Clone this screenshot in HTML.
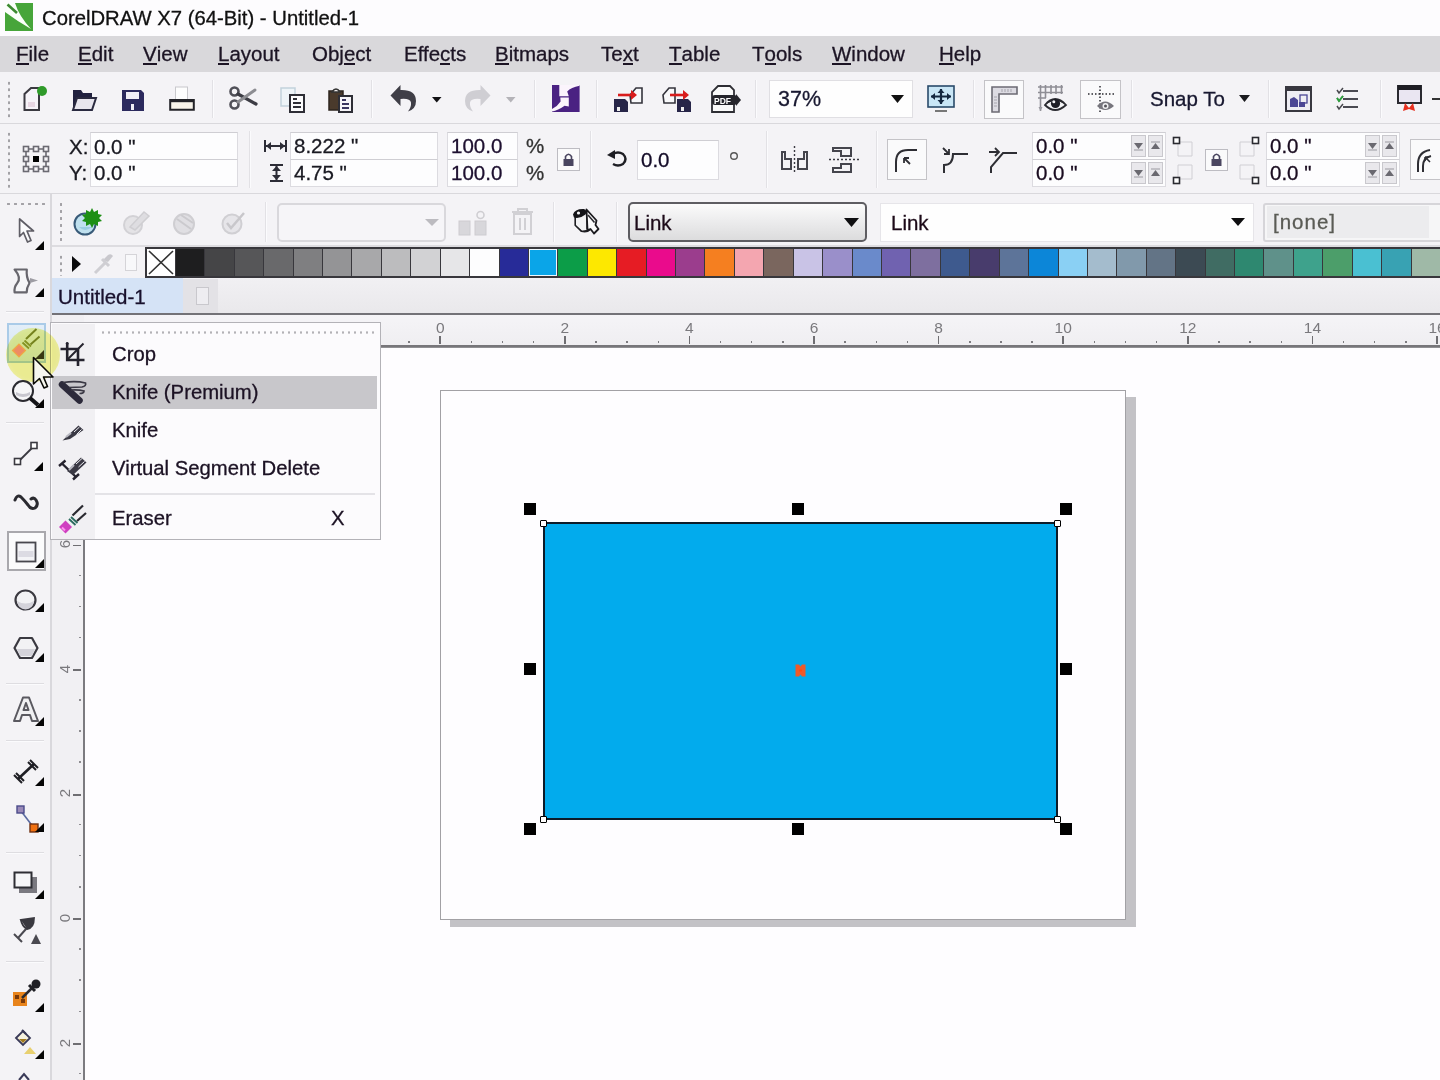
<!DOCTYPE html>
<html><head><meta charset="utf-8">
<style>
*{margin:0;padding:0;box-sizing:border-box}
html,body{width:1440px;height:1080px;overflow:hidden;background:#f3f2f5;font-family:"Liberation Sans",sans-serif;color:#1a1a22}
.a{position:absolute}
svg{position:absolute;overflow:visible}
#title{left:0;top:0;width:1440px;height:36px;background:#fdfcfe}
#menu{left:0;top:36px;width:1440px;height:36px;background:#d9d8db}
#tb1{left:0;top:72px;width:1440px;height:52px;background:#f4f3f6;border-bottom:1.5px solid #d9d8dc}
#prop{left:0;top:124px;width:1440px;height:70px;background:#f4f3f6;border-bottom:1.5px solid #d9d8dc}
#toolbox{left:0;top:194px;width:51px;height:886px;background:#f4f3f6;border-right:2px solid #dddce0}
#tb2{left:51px;top:194px;width:1389px;height:53px;background:#f4f3f6;border-bottom:2px solid #dddce0}
#pal{left:51px;top:247px;width:1389px;height:32px;background:#f4f3f6}
#tabrow{left:51px;top:278px;width:1389px;height:37px;background:linear-gradient(#f1f0f3,#e9e8eb)}
#hruler{left:51px;top:315px;width:1389px;height:33px;background:#f1f0f3;border-bottom:2px solid #909093}
#vruler{left:51px;top:315px;width:34px;height:765px;background:#f1f0f3;border-right:2px solid #909093}
#canvas{left:85px;top:347px;width:1355px;height:733px;background:#fefdff}
.t{position:absolute;white-space:nowrap;font-size:20.5px;line-height:24px;-webkit-text-stroke:0.3px currentColor}
.m{top:6px;color:#1c1424}
.m u{text-decoration:none;border-bottom:2px solid #1c1424;display:inline-block;line-height:19px}
.sep{position:absolute;width:2px;background:#e2e1e5;border-right:1px solid #fbfbfd}
.grip{position:absolute;width:4px;background-image:radial-gradient(circle,#a3a2a6 1.1px,transparent 1.5px);background-size:4px 6.5px}
.field{position:absolute;background:#fdfdfe;border:1px solid #dcdbe0;border-top-color:#cfced3}
.btnp{position:absolute;border:1px solid #c4c3c7;background:#fafafb}
</style></head><body>
<div id="tb1" class="a"></div>
<div id="prop" class="a"></div>
<div id="toolbox" class="a"></div>
<div id="tb2" class="a"></div>
<div id="pal" class="a"></div>
<div id="tabrow" class="a"></div>
<div id="canvas" class="a"></div>
<div id="hruler" class="a"></div>
<div id="vruler" class="a"></div>
<!-- TITLE -->
<div id="title" class="a">
 <svg style="left:5px;top:3px" width="28" height="28" viewBox="0 0 28 28">
  <rect x="0" y="0" width="28" height="28" fill="#47a53a"/>
  <path d="M0 0 L10 0 Q14 13 26 26 Q12 18 0 9 Z" fill="#fbfffa"/>
  <path d="M2.5 1.5 L12 10" stroke="#3d8a31" stroke-width="2.6"/>
 </svg>
 <div class="t" style="left:42px;top:6px;font-size:20.3px;color:#111">CorelDRAW X7 (64-Bit) - Untitled-1</div>
</div>
<!-- MENU -->
<div id="menu" class="a">
 <div class="t m" style="left:16px"><u>F</u>ile</div>
 <div class="t m" style="left:78px"><u>E</u>dit</div>
 <div class="t m" style="left:143px"><u>V</u>iew</div>
 <div class="t m" style="left:218px"><u>L</u>ayout</div>
 <div class="t m" style="left:312px">Obj<u>e</u>ct</div>
 <div class="t m" style="left:404px">Effe<u>c</u>ts</div>
 <div class="t m" style="left:495px"><u>B</u>itmaps</div>
 <div class="t m" style="left:601px">Te<u>x</u>t</div>
 <div class="t m" style="left:669px"><u>T</u>able</div>
 <div class="t m" style="left:752px">T<u>o</u>ols</div>
 <div class="t m" style="left:832px"><u>W</u>indow</div>
 <div class="t m" style="left:939px"><u>H</u>elp</div>
</div>
<!-- TOOLBAR 1 (y 72-124) -->
<div class="grip" style="left:7px;top:80px;height:38px"></div>
<!-- new -->
<svg style="left:23px;top:86px" width="26" height="26" viewBox="0 0 26 26">
 <path d="M1.5 24 V8 L8 2 H16 V24 Z" fill="#f6f3f8" stroke="#3a3940" stroke-width="2"/>
 <rect x="5" y="16" width="7" height="5" fill="#e7d6e2"/>
 <circle cx="19" cy="5" r="5" fill="#2f9a2a"/>
</svg>
<!-- open -->
<svg style="left:72px;top:88px" width="26" height="24" viewBox="0 0 26 24">
 <path d="M1 22 V2 H9 L11 5 H20 V10 H5 Z" fill="#21213f"/>
 <path d="M1 22 L5 10 H24 L20 22 Z" fill="#e8e6ee" stroke="#2a2a40" stroke-width="2"/>
</svg>
<!-- save -->
<svg style="left:122px;top:90px" width="22" height="21" viewBox="0 0 22 21">
 <path d="M0 0 H19 L22 3 V21 H0 Z" fill="#2c2a5e"/>
 <rect x="4" y="2" width="13" height="7" fill="#f0eef6"/>
 <rect x="9" y="14" width="3" height="6" fill="#f0eef6"/>
</svg>
<!-- print -->
<svg style="left:169px;top:86px" width="26" height="25" viewBox="0 0 26 25">
 <rect x="6.5" y="1" width="12" height="13" fill="#fdfdfd" stroke="#c8c8cc" stroke-width="1"/>
 <path d="M1.2 14 H24.8 V23.8 H1.2 Z" fill="#f8f4ea" stroke="#232328" stroke-width="2"/>
 <rect x="1" y="13" width="24" height="3.2" fill="#232328"/>
</svg>
<div class="sep" style="left:212px;top:80px;height:38px"></div>
<!-- scissors -->
<svg style="left:229px;top:86px" width="30" height="24" viewBox="0 0 30 24">
 <circle cx="5.5" cy="5.5" r="4" fill="none" stroke="#505058" stroke-width="2.6"/>
 <circle cx="5.5" cy="18.5" r="4" fill="none" stroke="#505058" stroke-width="2.6"/>
 <path d="M9 8 L27 18" stroke="#3c3c44" stroke-width="3.2" stroke-linecap="round"/>
 <path d="M9 16 L26 4" stroke="#8d8d92" stroke-width="3" stroke-linecap="round"/>
</svg>
<!-- copy -->
<svg style="left:280px;top:87px" width="25" height="26" viewBox="0 0 25 26">
 <rect x="1" y="1" width="14" height="18" fill="#eef4f8" stroke="#c2d2dc" stroke-width="1.5"/>
 <rect x="10" y="8" width="14" height="17" fill="#fbfbfc" stroke="#2e2e36" stroke-width="2"/>
 <path d="M13 12 H17 M13 16 H21 M13 20 H21" stroke="#2e2e36" stroke-width="2"/>
</svg>
<!-- paste -->
<svg style="left:328px;top:87px" width="25" height="26" viewBox="0 0 25 26">
 <rect x="1" y="4" width="14" height="19" fill="#4a3a2c" stroke="#2c241e" stroke-width="1.5"/>
 <path d="M4 5 Q8 -1 12 5 Z" fill="#f4f0f0" stroke="#333" stroke-width="1.5"/>
 <rect x="11" y="9" width="13" height="16" fill="#f6f4f8" stroke="#2e2e36" stroke-width="2"/>
 <path d="M14 13 H18 M14 17 H21 M14 21 H21" stroke="#3a3560" stroke-width="2"/>
</svg>
<div class="sep" style="left:371px;top:80px;height:38px"></div>
<!-- undo -->
<svg style="left:389px;top:84px" width="30" height="30" viewBox="0 0 30 30">
 <path d="M1.5 11.5 L11.5 1 V6 Q27 5.5 27 17 Q27 25 19 27.5 Q22.5 23 22 18.5 Q21 14 11.5 15 V22 Z" fill="#3f3e47"/>
</svg>
<svg style="left:432px;top:97px" width="10" height="6" viewBox="0 0 10 6"><path d="M0 0 H9.5 L4.75 5.5Z" fill="#111114"/></svg>
<!-- redo disabled -->
<svg style="left:462px;top:84px" width="30" height="30" viewBox="0 0 30 30">
 <path d="M28.5 11.5 L18.5 1 V6 Q3 5.5 3 17 Q3 25 11 27.5 Q7.5 23 8 18.5 Q9 14 18.5 15 V22 Z" fill="#cfced3"/>
</svg>
<svg style="left:506px;top:97px" width="10" height="6" viewBox="0 0 10 6"><path d="M0 0 H9.5 L4.75 5.5Z" fill="#b4b3b8"/></svg>
<div class="sep" style="left:534px;top:80px;height:38px"></div>
<!-- corel connect -->
<svg style="left:551.7px;top:84.7px" width="28" height="27" viewBox="0 0 28 27">
 <rect x="0" y="0" width="27.6" height="27" fill="#4a2282"/>
 <path d="M7.3 0 H27.6 V0.8 Q19 2.5 15.2 6.5 L16.8 11.3 H7.3 Z" fill="#fbf4fc"/>
 <path d="M0 24 Q5.5 21.5 8.6 16.6 L8.3 12.5 H16.8 V21.5 L12.6 20.8 Q6 25.5 0 26.5 Z" fill="#fbf4fc"/>
</svg>
<div class="sep" style="left:596px;top:80px;height:38px"></div>
<!-- import -->
<svg style="left:612px;top:86px" width="32" height="26" viewBox="0 0 32 26">
 <path d="M18 9 L24 2 H30 V17 H19 Z" fill="#f8f8fa" stroke="#34343c" stroke-width="1.6"/>
 <path d="M2 13 H13 L16 16 V26 H2 Z" fill="#272548"/>
 <rect x="5" y="21" width="3" height="4" fill="#eee"/>
 <path d="M6 9 H22" stroke="#d81c1c" stroke-width="2.6"/>
 <path d="M19 4 L25 9 L19 14 Z" fill="#d81c1c"/>
</svg>
<!-- export -->
<svg style="left:661px;top:86px" width="32" height="26" viewBox="0 0 32 26">
 <path d="M2 9 L8 2 H14 V17 H3 Z" fill="#f8f8fa" stroke="#34343c" stroke-width="1.6"/>
 <path d="M16 13 H27 L30 16 V26 H16 Z" fill="#272548"/>
 <rect x="20" y="21" width="3" height="4" fill="#eee"/>
 <path d="M9 9 H25" stroke="#d81c1c" stroke-width="2.6"/>
 <path d="M22 4 L28 9 L22 14 Z" fill="#d81c1c"/>
</svg>
<!-- pdf -->
<svg style="left:710px;top:85px" width="32" height="28" viewBox="0 0 32 28">
 <path d="M2 27 V7 L8 1 H20 L24 5 V27 Z" fill="#fafafa" stroke="#2e2e34" stroke-width="1.8"/>
 <rect x="2" y="10" width="25" height="10" rx="3" fill="#26262c"/>
 <text x="4" y="18.5" font-family="Liberation Sans" font-weight="bold" font-size="8.5" fill="#fff">PDF</text>
 <path d="M26 9 L31 15 L26 21 Z" fill="#26262c"/>
</svg>
<div class="sep" style="left:755px;top:80px;height:38px"></div>
<!-- zoom combo -->
<div class="field" style="left:769px;top:80px;width:144px;height:38px;border-color:#e0dfe3;background:#fefefe"></div>
<div class="t" style="left:778px;top:86.5px;font-size:21.5px;color:#181830">37%</div>
<svg style="left:891px;top:95px" width="14" height="9" viewBox="0 0 14 9"><path d="M0 0 H13 L6.5 8Z" fill="#111"/></svg>
<!-- fullscreen -->
<svg style="left:927px;top:85px" width="28" height="29" viewBox="0 0 28 29">
 <rect x="1" y="1" width="26" height="21" fill="#c9e6f6" stroke="#2a4a6a" stroke-width="1.6"/>
 <path d="M4 11.5 H24 M14 4 V19" stroke="#152840" stroke-width="2.2"/>
 <path d="M4 11.5 L8 8 V15Z M24 11.5 L20 8 V15Z M14 4 L10.5 8 H17.5Z M14 19 L10.5 15 H17.5Z" fill="#152840"/>
 <path d="M8 26 H20" stroke="#777" stroke-width="2"/>
</svg>
<div class="sep" style="left:973px;top:80px;height:38px"></div>
<!-- rulers (pressed) -->
<div class="btnp" style="left:984px;top:80px;width:40px;height:39px"></div>
<svg style="left:991px;top:86px" width="27" height="27" viewBox="0 0 27 27">
 <path d="M1 1 H26 V8 H8 V26 H1 Z" fill="#dcdbe2" stroke="#6c6b74" stroke-width="1.6"/>
 <path d="M11 3 V6 M14 3 V6 M17 3 V6 M20 3 V6 M3 11 H6 M3 14 H6 M3 17 H6 M3 20 H6" stroke="#a6a5ad" stroke-width="1"/>
</svg>
<!-- grid eye -->
<svg style="left:1037px;top:84px" width="32" height="30" viewBox="0 0 32 30">
 <path d="M1 3 H26 M1 8.5 H26 M1 14 H9 M3.5 1 V27 M8.5 1 V14 M14 1 V10 M19 1 V10 M24.5 1 V10" stroke="#8f8e95" stroke-width="1.6"/>
 <path d="M1.5 23 L3.5 27 L5.5 23 Z" fill="#9a99a0"/>
 <path d="M8 21 Q18 9 29 21 Q18 31 8 21 Z" fill="#f4f4f6" stroke="#2a2a30" stroke-width="1.8"/>
 <path d="M10 19.5 Q18 10.5 27 19.5 Q23 17 18.5 17 Q14 17 10 19.5Z" fill="#2a2a30"/>
 <circle cx="18.5" cy="19.5" r="4.6" fill="#1e1e26"/>
 <circle cx="16.8" cy="17.8" r="1.5" fill="#f4f4f6"/>
</svg>
<!-- guides eye (pressed) -->
<div class="btnp" style="left:1080px;top:80px;width:41px;height:39px"></div>
<svg style="left:1087px;top:85px" width="30" height="29" viewBox="0 0 30 29">
 <path d="M13 1 V28 M1 9 H28" stroke="#2a2a30" stroke-width="1.5" stroke-dasharray="1.5 2"/>
 <path d="M10 21 Q18 12 27 21 Q18 29 10 21 Z" fill="#77767d"/>
 <circle cx="18.5" cy="21" r="3" fill="#f0f0f2"/>
 <circle cx="18.5" cy="21" r="1.5" fill="#55545a"/>
</svg>
<div class="sep" style="left:1131px;top:80px;height:38px"></div>
<div class="t" style="left:1150px;top:87px;color:#181830">Snap To</div>
<svg style="left:1239px;top:95px" width="12" height="8" viewBox="0 0 12 8"><path d="M0 0 H11 L5.5 7Z" fill="#1a1a1e"/></svg>
<div class="sep" style="left:1268px;top:80px;height:38px"></div>
<!-- options -->
<svg style="left:1285px;top:86px" width="27" height="26" viewBox="0 0 27 26">
 <rect x="1" y="1" width="25" height="24" fill="#eeedf3" stroke="#38373f" stroke-width="2"/>
 <rect x="1" y="1" width="25" height="4" fill="#38373f"/>
 <path d="M5 21 V13 L9 11 L13 14 V21 Z M14 21 V16 H20 V21Z" fill="#4b4694"/>
 <rect x="15" y="9" width="7" height="8" fill="none" stroke="#4b4694" stroke-width="1.3"/>
</svg>
<!-- checklist -->
<svg style="left:1336px;top:87px" width="24" height="25" viewBox="0 0 24 25">
 <path d="M7 4 H22 M7 12 H22 M7 20 H22" stroke="#4a4a52" stroke-width="2"/>
 <path d="M1 3 L3 6 L7 1 M1 11 L3 14 L7 9 M1 19 L3 22 L7 17" stroke="#48484e" stroke-width="1.5" fill="none"/>
 <path d="M1 11 L3 14 L7 9" stroke="#2aa33a" stroke-width="1.8" fill="none"/>
</svg>
<div class="sep" style="left:1380px;top:80px;height:38px"></div>
<!-- launch -->
<svg style="left:1397px;top:84px" width="25" height="28" viewBox="0 0 25 28">
 <rect x="1" y="2" width="23" height="17" fill="#eae6f2" stroke="#2a2a30" stroke-width="2"/>
 <rect x="1" y="1" width="23" height="5" fill="#1e1e24"/>
 <path d="M8 19 L12 24 L16 19 L18 27 L12 25 L6 27 Z" fill="#e83020"/>
</svg>
<svg style="left:1432px;top:98px" width="10" height="4" viewBox="0 0 10 4"><path d="M0 1 H10" stroke="#333" stroke-width="2"/></svg>
<!-- PROPERTY BAR (y 124-194) -->
<div class="grip" style="left:7px;top:131px;height:58px"></div>
<svg style="left:22px;top:145px" width="30" height="29" viewBox="0 0 30 29">
 <g fill="none" stroke="#6b6a72" stroke-width="1.6">
  <rect x="1.5" y="1.5" width="5" height="5"/><rect x="11.5" y="1.5" width="5" height="5"/><rect x="21.5" y="1.5" width="5" height="5"/>
  <rect x="1.5" y="11.5" width="5" height="5"/><rect x="21.5" y="11.5" width="5" height="5"/>
  <rect x="1.5" y="21.5" width="5" height="5"/><rect x="11.5" y="21.5" width="5" height="5"/><rect x="21.5" y="21.5" width="5" height="5"/>
  <path d="M6.5 4 H11.5 M16.5 4 H21.5 M6.5 24 H11.5 M16.5 24 H21.5 M4 6.5 V11.5 M4 16.5 V21.5 M24 6.5 V11.5 M24 16.5 V21.5"/>
 </g>
 <rect x="11" y="11" width="6" height="6" fill="#000"/>
</svg>
<div class="t" style="left:69px;top:135px">X:</div>
<div class="t" style="left:69px;top:161px">Y:</div>
<div class="field" style="left:90px;top:132px;width:148px;height:28px"></div>
<div class="field" style="left:90px;top:159px;width:148px;height:28px"></div>
<div class="t" style="left:94px;top:135px">0.0 "</div>
<div class="t" style="left:94px;top:161px">0.0 "</div>
<div class="sep" style="left:249px;top:131px;height:57px"></div>
<svg style="left:264px;top:140px" width="23" height="12" viewBox="0 0 23 12">
 <path d="M1 0 V12 M22 0 V12 M2 6 H21" stroke="#2c2c36" stroke-width="2"/>
 <path d="M2 6 L7 2 V10Z M21 6 L16 2 V10Z" fill="#2c2c36"/>
</svg>
<svg style="left:270px;top:164px" width="13" height="18" viewBox="0 0 13 18">
 <path d="M0 1 H13 M0 17 H13 M6.5 2 V16" stroke="#2c2c36" stroke-width="2"/>
 <path d="M6.5 2 L2 7 H11Z M6.5 16 L2 11 H11Z" fill="#2c2c36"/>
</svg>
<div class="field" style="left:290px;top:132px;width:148px;height:28px"></div>
<div class="field" style="left:290px;top:159px;width:148px;height:28px"></div>
<div class="t" style="left:294px;top:134px">8.222 "</div>
<div class="t" style="left:294px;top:161px">4.75 "</div>
<div class="field" style="left:447px;top:132px;width:71px;height:28px"></div>
<div class="field" style="left:447px;top:159px;width:71px;height:28px"></div>
<div class="t" style="left:451px;top:134px;color:#1e1030">100.0</div>
<div class="t" style="left:451px;top:161px;color:#1e1030">100.0</div>
<div class="t" style="left:526px;top:134px;color:#333">%</div>
<div class="t" style="left:526px;top:161px;color:#333">%</div>
<div class="btnp" style="left:557px;top:148px;width:23px;height:23px;border-color:#bdbcc2"></div>
<svg style="left:562px;top:152px" width="13" height="15" viewBox="0 0 13 15">
 <path d="M3.5 7 V4.5 Q6.5 0 9.5 4.5 V7" fill="none" stroke="#4a4660" stroke-width="1.6"/>
 <rect x="1.5" y="7" width="10" height="7" fill="#4a4660"/>
</svg>
<div class="sep" style="left:590px;top:131px;height:57px"></div>
<svg style="left:606px;top:150px" width="23" height="18" viewBox="0 0 23 18">
 <path d="M7 4 Q12 1 17 4 Q22 9 17 14 Q12 17 7 14" fill="none" stroke="#1e1e24" stroke-width="2.4"/>
 <path d="M1 5 L9 0 V9 Z" fill="#1e1e24"/>
</svg>
<div class="field" style="left:637px;top:140px;width:82px;height:40px"></div>
<div class="t" style="left:641px;top:148px;color:#140c28">0.0</div>
<svg style="left:729px;top:151px" width="10" height="10" viewBox="0 0 10 10"><circle cx="5" cy="5" r="3.3" fill="none" stroke="#555" stroke-width="1.4"/></svg>
<div class="sep" style="left:766px;top:131px;height:57px"></div>
<!-- mirror h -->
<svg style="left:780px;top:146px" width="30" height="28" viewBox="0 0 30 28">
 <path d="M14.5 0 V28" stroke="#3a3a42" stroke-width="1.4" stroke-dasharray="2 2"/>
 <path d="M2 6 V23 H11 V13 H5 V6 Z" fill="none" stroke="#45454d" stroke-width="2"/>
 <path d="M27 6 V23 H18 V13 H24 V6 Z" fill="none" stroke="#45454d" stroke-width="2"/>
</svg>
<!-- mirror v -->
<svg style="left:829px;top:146px" width="30" height="28" viewBox="0 0 30 28">
 <path d="M0 13.5 H30" stroke="#3a3a42" stroke-width="1.4" stroke-dasharray="2 2"/>
 <path d="M4 2 H22 V10 H12 V5 H4 Z" fill="none" stroke="#45454d" stroke-width="2"/>
 <path d="M4 26 H22 V18 H12 V22 H4 Z" fill="none" stroke="#45454d" stroke-width="2"/>
</svg>
<div class="sep" style="left:876px;top:131px;height:57px"></div>
<!-- round corner pressed -->
<div class="btnp" style="left:887px;top:139px;width:40px;height:41px"></div>
<svg style="left:893px;top:146px" width="28" height="28" viewBox="0 0 28 28">
 <path d="M3 26 V16 Q3 4 15 4 H24" fill="none" stroke="#2e2e34" stroke-width="2"/>
 <path d="M11 12 L17 18 M11 12 H16 M11 12 V17" stroke="#2e2e34" stroke-width="1.8" fill="none"/>
</svg>
<!-- scallop -->
<svg style="left:940px;top:145px" width="30" height="30" viewBox="0 0 30 30">
 <path d="M4 28 V20 Q13 20 13 9 H28" fill="none" stroke="#2e2e34" stroke-width="2"/>
 <path d="M3 3 L9 9 M4 9 H9 V4" stroke="#2e2e34" stroke-width="1.8" fill="none"/>
</svg>
<!-- chamfer -->
<svg style="left:987px;top:145px" width="32" height="30" viewBox="0 0 32 30">
 <path d="M4 28 V22 L16 8 H30" fill="none" stroke="#2e2e34" stroke-width="2"/>
 <path d="M2 7 H12 M8 3 L12 7 L8 11" stroke="#2e2e34" stroke-width="1.8" fill="none"/>
</svg>
<!-- corner fields -->
<div class="field" style="left:1032px;top:132px;width:134px;height:28px"></div>
<div class="field" style="left:1032px;top:159px;width:134px;height:28px"></div>
<div class="t" style="left:1036px;top:134px;color:#1a0c20">0.0 "</div>
<div class="t" style="left:1036px;top:161px;color:#1a0c20">0.0 "</div>
<div class="field" style="left:1266px;top:132px;width:134px;height:28px"></div>
<div class="field" style="left:1266px;top:159px;width:134px;height:28px"></div>
<div class="t" style="left:1270px;top:134px;color:#1a0c20">0.0 "</div>
<div class="t" style="left:1270px;top:161px;color:#1a0c20">0.0 "</div>
<div class="a" style="left:1131px;top:135px;width:15px;height:22px;border:1px solid #c9c8cd;background:#e9e8ec"></div>
<svg style="left:1132px;top:140px" width="13" height="12" viewBox="0 0 13 12"><path d="M2 3 H11 L6.5 9Z" fill="#6a6970"/><path d="M2 10 H11" stroke="#9a99a0" stroke-width="1"/></svg>
<div class="a" style="left:1148px;top:135px;width:15px;height:22px;border:1px solid #c9c8cd;background:#e9e8ec"></div>
<svg style="left:1149px;top:140px" width="13" height="12" viewBox="0 0 13 12"><path d="M2 9 H11 L6.5 3Z" fill="#6a6970"/><path d="M2 2 H11" stroke="#9a99a0" stroke-width="1"/></svg>
<div class="a" style="left:1131px;top:162px;width:15px;height:22px;border:1px solid #c9c8cd;background:#e9e8ec"></div>
<svg style="left:1132px;top:167px" width="13" height="12" viewBox="0 0 13 12"><path d="M2 3 H11 L6.5 9Z" fill="#6a6970"/><path d="M2 10 H11" stroke="#9a99a0" stroke-width="1"/></svg>
<div class="a" style="left:1148px;top:162px;width:15px;height:22px;border:1px solid #c9c8cd;background:#e9e8ec"></div>
<svg style="left:1149px;top:167px" width="13" height="12" viewBox="0 0 13 12"><path d="M2 9 H11 L6.5 3Z" fill="#6a6970"/><path d="M2 2 H11" stroke="#9a99a0" stroke-width="1"/></svg>
<div class="a" style="left:1365px;top:135px;width:15px;height:22px;border:1px solid #c9c8cd;background:#e9e8ec"></div>
<svg style="left:1366px;top:140px" width="13" height="12" viewBox="0 0 13 12"><path d="M2 3 H11 L6.5 9Z" fill="#6a6970"/><path d="M2 10 H11" stroke="#9a99a0" stroke-width="1"/></svg>
<div class="a" style="left:1382px;top:135px;width:15px;height:22px;border:1px solid #c9c8cd;background:#e9e8ec"></div>
<svg style="left:1383px;top:140px" width="13" height="12" viewBox="0 0 13 12"><path d="M2 9 H11 L6.5 3Z" fill="#6a6970"/><path d="M2 2 H11" stroke="#9a99a0" stroke-width="1"/></svg>
<div class="a" style="left:1365px;top:162px;width:15px;height:22px;border:1px solid #c9c8cd;background:#e9e8ec"></div>
<svg style="left:1366px;top:167px" width="13" height="12" viewBox="0 0 13 12"><path d="M2 3 H11 L6.5 9Z" fill="#6a6970"/><path d="M2 10 H11" stroke="#9a99a0" stroke-width="1"/></svg>
<div class="a" style="left:1382px;top:162px;width:15px;height:22px;border:1px solid #c9c8cd;background:#e9e8ec"></div>
<svg style="left:1383px;top:167px" width="13" height="12" viewBox="0 0 13 12"><path d="M2 9 H11 L6.5 3Z" fill="#6a6970"/><path d="M2 2 H11" stroke="#9a99a0" stroke-width="1"/></svg>
<svg style="left:1172px;top:136px" width="22" height="22" viewBox="0 0 22 22"><g transform="translate(0,0) scale(1,1)"><path d="M6 6 H20 V20 H6 Z" fill="none" stroke="#d0cfd4" stroke-width="1"/><rect x="1.5" y="1.5" width="6" height="6" fill="#fff" stroke="#2a2a30" stroke-width="1.6"/></g></svg>
<svg style="left:1172px;top:163px" width="22" height="22" viewBox="0 0 22 22"><g transform="translate(0,22) scale(1,-1)"><path d="M6 6 H20 V20 H6 Z" fill="none" stroke="#d0cfd4" stroke-width="1"/><rect x="1.5" y="1.5" width="6" height="6" fill="#fff" stroke="#2a2a30" stroke-width="1.6"/></g></svg>
<svg style="left:1238px;top:136px" width="22" height="22" viewBox="0 0 22 22"><g transform="translate(22,0) scale(-1,1)"><path d="M6 6 H20 V20 H6 Z" fill="none" stroke="#d0cfd4" stroke-width="1"/><rect x="1.5" y="1.5" width="6" height="6" fill="#fff" stroke="#2a2a30" stroke-width="1.6"/></g></svg>
<svg style="left:1238px;top:163px" width="22" height="22" viewBox="0 0 22 22"><g transform="translate(22,22) scale(-1,-1)"><path d="M6 6 H20 V20 H6 Z" fill="none" stroke="#d0cfd4" stroke-width="1"/><rect x="1.5" y="1.5" width="6" height="6" fill="#fff" stroke="#2a2a30" stroke-width="1.6"/></g></svg>
<div class="btnp" style="left:1205px;top:149px;width:23px;height:22px;border-color:#bdbcc2"></div>
<svg style="left:1210px;top:152px" width="13" height="15" viewBox="0 0 13 15"><path d="M3.5 7 V4.5 Q6.5 0 9.5 4.5 V7" fill="none" stroke="#4a4660" stroke-width="1.6"/><rect x="1.5" y="7" width="10" height="7" fill="#4a4660"/></svg>
<div class="btnp" style="left:1410px;top:139px;width:40px;height:41px"></div>
<svg style="left:1415px;top:146px" width="28" height="28" viewBox="0 0 28 28"><path d="M3 26 V18 Q3 6 15 4" fill="none" stroke="#2e2e34" stroke-width="2"/><path d="M8 26 V20 Q8 12 16 10" fill="none" stroke="#2e2e34" stroke-width="2"/><path d="M10 11 L15 16 M10 11 H14 M10 11 V15" stroke="#2e2e34" stroke-width="1.6"/></svg>
<!-- TOOLBAR 2 (y 194-247) -->
<div class="grip" style="left:59px;top:201px;height:42px;background-size:4px 7px"></div>
<svg style="left:73px;top:207px" width="32" height="30" viewBox="0 0 32 30">
 <circle cx="12" cy="17" r="10.5" fill="#bfe0ee" stroke="#385a78" stroke-width="2"/>
 <path d="M6 20 Q12 26 19 20" fill="#8cc4dc" opacity="0.7"/>
 <path d="M19 1 L21 5 L25 3 L25 7 L29 8 L26 11 L29 14 L25 15 L25 19 L21 17 L19 21 L17 17 L13 19 L13 15 L9 14 L12 11 L9 8 L13 7 L13 3 L17 5 Z" fill="#1d8f14"/>
</svg>
<svg style="left:122px;top:208px" width="30" height="28" viewBox="0 0 30 28">
 <circle cx="11" cy="17" r="9" fill="#e4e3e6" stroke="#d2d1d5" stroke-width="2"/>
 <path d="M8 19 L22 4 L27 8 L13 22 Z" fill="#dedde1" stroke="#cfced2" stroke-width="1.5"/>
</svg>
<svg style="left:171px;top:207px" width="28" height="30" viewBox="0 0 28 30">
 <circle cx="13" cy="17" r="10" fill="#e0dfe3" stroke="#cfced2" stroke-width="2"/>
 <path d="M6 12 L20 22 M10 8 L22 16" stroke="#cbcace" stroke-width="2"/>
</svg>
<svg style="left:220px;top:208px" width="28" height="28" viewBox="0 0 28 28">
 <circle cx="12" cy="16" r="9.5" fill="#e6e5e9" stroke="#d0cfd3" stroke-width="2"/>
 <path d="M7 15 L11 20 L24 5" stroke="#c8c7cb" stroke-width="2.5" fill="none"/>
</svg>
<div class="sep" style="left:265px;top:202px;height:40px"></div>
<div class="a" style="left:277px;top:203px;width:169px;height:39px;border:2px solid #d9d8dc;border-radius:5px;background:#f6f5f8"></div>
<svg style="left:425px;top:219px" width="15" height="8" viewBox="0 0 15 8"><path d="M0 0 H14 L7 7Z" fill="#bcbbc0"/></svg>
<svg style="left:458px;top:210px" width="32" height="26" viewBox="0 0 32 26">
 <rect x="1" y="11" width="11" height="14" fill="#d8d7db" stroke="#cdccd0"/>
 <rect x="17" y="11" width="11" height="14" fill="#d8d7db" stroke="#cdccd0"/>
 <circle cx="22.5" cy="5" r="3.5" fill="none" stroke="#cfced2" stroke-width="1.6"/>
</svg>
<svg style="left:511px;top:207px" width="23" height="29" viewBox="0 0 23 29">
 <path d="M1 5 H22 M7 5 V2 H16 V5" stroke="#d1d0d4" stroke-width="2" fill="none"/>
 <path d="M3 7 H20 V27 H3 Z" fill="none" stroke="#d1d0d4" stroke-width="2"/>
 <path d="M9 11 V23 M14 11 V23" stroke="#d1d0d4" stroke-width="2"/>
</svg>
<div class="sep" style="left:553px;top:202px;height:40px"></div>
<svg style="left:0;top:0" width="1" height="1" viewBox="0 0 1 1">
 <path d="M575.5 216 V225 L581.5 231 Q587 232.5 590.5 229" fill="#f6f6f8" stroke="#1e1e22" stroke-width="2.2"/>
 <path d="M576 217 L587 215 V229.5 L582 230.5 L576 225 Z" fill="#f2f2f4"/>
 <path d="M587 215 V229.5" stroke="#3a3a40" stroke-width="1.6"/>
 <path d="M586.5 209.5 L596.5 220.5 L595.5 225 L598.5 229 L594 233.5 L590.5 229 L587.5 230 Z" fill="#fbfbfc" stroke="#1a1a1e" stroke-width="1.8" stroke-linejoin="round"/>
 <path d="M588 215 L594.5 222.5" stroke="#2a2a30" stroke-width="1.6"/>
 <path d="M573 214.5 Q575 208.5 584 209 Q588 211 585.5 214.5 Q580 219 574 217.5 Z" fill="#141418"/>
 <circle cx="578.5" cy="213" r="1.6" fill="#f4f4f6"/>
</svg>
<div class="sep" style="left:616px;top:202px;height:40px"></div>
<div class="a" style="left:628px;top:202px;width:239px;height:40px;border:2px solid #5e5d62;border-radius:5px;background:linear-gradient(#fbfbfb,#ededee 45%,#dcdcdd)"></div>
<div class="t" style="left:634px;top:211px;color:#1c0a18">Link</div>
<svg style="left:844px;top:218px" width="16" height="10" viewBox="0 0 16 10"><path d="M0 0 H15 L7.5 9Z" fill="#0e0e10"/></svg>
<div class="a" style="left:880px;top:203px;width:374px;height:39px;border:1px solid #e6e5e9;background:#fefefe"></div>
<div class="t" style="left:891px;top:211px;color:#1c0a18">Link</div>
<svg style="left:1231px;top:218px" width="15" height="9" viewBox="0 0 15 9"><path d="M0 0 H14 L7 8Z" fill="#0e0e10"/></svg>
<div class="a" style="left:1263px;top:203px;width:190px;height:39px;border:2px solid #d6d5d9;border-radius:3px;background:#f6f6f7"></div>
<div class="a" style="left:1267px;top:206px;width:162px;height:32px;background:#ececee"></div>
<div class="t" style="left:1273px;top:210px;color:#5a5b55;letter-spacing:1px">[none]</div>
<!-- PALETTE ROW -->
<div class="grip" style="left:59px;top:254px;height:22px"></div>
<svg style="left:72px;top:256px" width="10" height="16" viewBox="0 0 10 16"><path d="M0 0 L9 8 L0 16Z" fill="#0a0a0c"/></svg>
<svg style="left:92px;top:253px" width="23" height="22" viewBox="0 0 23 22"><path d="M3 20 L13 10" stroke="#cfced3" stroke-width="3"/><path d="M11 7 L16 2 Q19 0 21 3 L16 9 Z" fill="#c9c8cd"/><path d="M10 6 L17 13" stroke="#cfced3" stroke-width="3"/></svg>
<div class="a" style="left:125px;top:254px;width:12px;height:17px;border:1.5px solid #d5d4d8;background:#f8f8fa"></div>
<div class="a" style="left:145px;top:247px;width:1300px;height:31px;background:#38373c"></div>
<div class="a" style="left:147px;top:249px;width:28px;height:27px;background:#fff"></div>
<svg style="left:147px;top:249px" width="28" height="27" viewBox="0 0 28 27"><path d="M2 2 L26 25 M26 2 L2 25" stroke="#333" stroke-width="1.6"/></svg>
<div class="a" style="left:176px;top:249px;width:28px;height:27px;background:#1e1e1f;"></div>
<div class="a" style="left:205px;top:249px;width:29px;height:27px;background:#454547;"></div>
<div class="a" style="left:235px;top:249px;width:28px;height:27px;background:#565658;"></div>
<div class="a" style="left:264px;top:249px;width:29px;height:27px;background:#69696b;"></div>
<div class="a" style="left:294px;top:249px;width:28px;height:27px;background:#7f7f81;"></div>
<div class="a" style="left:323px;top:249px;width:28px;height:27px;background:#949496;"></div>
<div class="a" style="left:352px;top:249px;width:29px;height:27px;background:#a8a8aa;"></div>
<div class="a" style="left:382px;top:249px;width:28px;height:27px;background:#bcbcbe;"></div>
<div class="a" style="left:411px;top:249px;width:29px;height:27px;background:#d2d2d4;"></div>
<div class="a" style="left:441px;top:249px;width:28px;height:27px;background:#e6e6e8;"></div>
<div class="a" style="left:470px;top:249px;width:29px;height:27px;background:#fdfdfe;"></div>
<div class="a" style="left:500px;top:249px;width:28px;height:27px;background:#272b98;"></div>
<div class="a" style="left:529px;top:249px;width:28px;height:27px;background:#0aa5e8;outline:1.5px solid #eef7fc;outline-offset:-1.5px;"></div>
<div class="a" style="left:558px;top:249px;width:29px;height:27px;background:#0c9d48;"></div>
<div class="a" style="left:588px;top:249px;width:28px;height:27px;background:#fde800;"></div>
<div class="a" style="left:617px;top:249px;width:29px;height:27px;background:#e61c24;"></div>
<div class="a" style="left:647px;top:249px;width:28px;height:27px;background:#ea0b8c;"></div>
<div class="a" style="left:676px;top:249px;width:28px;height:27px;background:#9b3d8d;"></div>
<div class="a" style="left:705px;top:249px;width:29px;height:27px;background:#f57f20;"></div>
<div class="a" style="left:735px;top:249px;width:28px;height:27px;background:#f4a6b0;"></div>
<div class="a" style="left:764px;top:249px;width:29px;height:27px;background:#7a665e;"></div>
<div class="a" style="left:794px;top:249px;width:28px;height:27px;background:#c9c3e6;"></div>
<div class="a" style="left:823px;top:249px;width:29px;height:27px;background:#9a8fca;"></div>
<div class="a" style="left:853px;top:249px;width:28px;height:27px;background:#6a8acb;"></div>
<div class="a" style="left:882px;top:249px;width:28px;height:27px;background:#7062b0;"></div>
<div class="a" style="left:911px;top:249px;width:29px;height:27px;background:#7e6f9f;"></div>
<div class="a" style="left:941px;top:249px;width:28px;height:27px;background:#3e5a8e;"></div>
<div class="a" style="left:970px;top:249px;width:29px;height:27px;background:#483c6c;"></div>
<div class="a" style="left:1000px;top:249px;width:28px;height:27px;background:#5d7499;"></div>
<div class="a" style="left:1029px;top:249px;width:29px;height:27px;background:#0c86d8;"></div>
<div class="a" style="left:1059px;top:249px;width:28px;height:27px;background:#8ad0f4;"></div>
<div class="a" style="left:1088px;top:249px;width:28px;height:27px;background:#a4bccd;"></div>
<div class="a" style="left:1117px;top:249px;width:29px;height:27px;background:#8199ab;"></div>
<div class="a" style="left:1147px;top:249px;width:28px;height:27px;background:#637486;"></div>
<div class="a" style="left:1176px;top:249px;width:29px;height:27px;background:#3c4a53;"></div>
<div class="a" style="left:1206px;top:249px;width:28px;height:27px;background:#406c63;"></div>
<div class="a" style="left:1235px;top:249px;width:28px;height:27px;background:#2e8870;"></div>
<div class="a" style="left:1264px;top:249px;width:29px;height:27px;background:#5f918a;"></div>
<div class="a" style="left:1294px;top:249px;width:28px;height:27px;background:#3ea28c;"></div>
<div class="a" style="left:1323px;top:249px;width:29px;height:27px;background:#4c9e6a;"></div>
<div class="a" style="left:1353px;top:249px;width:28px;height:27px;background:#4ac0d2;"></div>
<div class="a" style="left:1382px;top:249px;width:29px;height:27px;background:#38a2b3;"></div>
<div class="a" style="left:1412px;top:249px;width:28px;height:27px;background:#9fb9a7;"></div>
<div class="a" style="left:1441px;top:249px;width:28px;height:27px;background:#b0c8b4;"></div>
<!-- TAB ROW -->
<div class="a" style="left:51px;top:278px;width:132px;height:35px;background:#d5e3f6"></div>
<div class="t" style="left:58px;top:285px;font-size:20.5px;color:#18102c">Untitled-1</div>
<div class="a" style="left:183px;top:279px;width:35px;height:34px;background:#e3e2e6"></div>
<div class="a" style="left:196px;top:287px;width:13px;height:18px;border:1.5px solid #c9c8cd;background:#eeedf1"></div>
<div class="a" style="left:51px;top:313px;width:1389px;height:2px;background:#737277"></div>
<!-- H RULER -->
<div class="a" style="left:51px;top:315px;width:1389px;height:32px;background:linear-gradient(#f5f4f7,#efeef1)"></div>
<div class="a" style="left:51px;top:345px;width:1389px;height:2px;background:#77767a"></div>
<div class="a" style="left:96.80px;top:341px;width:1.5px;height:2px;background:#7d7c80"></div>
<div class="a" style="left:127.95px;top:341px;width:1.5px;height:2px;background:#7d7c80"></div>
<div class="a" style="left:159.10px;top:341px;width:1.5px;height:2px;background:#7d7c80"></div>
<div class="a" style="left:190.25px;top:336px;width:1.5px;height:8px;background:#6f6e72"></div>
<div class="t" style="left:161.00px;top:318.5px;width:60px;text-align:center;font-size:15.5px;line-height:18px;color:#7a797d;-webkit-text-stroke:0">4</div>
<div class="a" style="left:221.40px;top:341px;width:1.5px;height:2px;background:#7d7c80"></div>
<div class="a" style="left:252.55px;top:341px;width:1.5px;height:2px;background:#7d7c80"></div>
<div class="a" style="left:283.70px;top:341px;width:1.5px;height:2px;background:#7d7c80"></div>
<div class="a" style="left:314.85px;top:336px;width:1.5px;height:8px;background:#6f6e72"></div>
<div class="t" style="left:285.60px;top:318.5px;width:60px;text-align:center;font-size:15.5px;line-height:18px;color:#7a797d;-webkit-text-stroke:0">2</div>
<div class="a" style="left:346.00px;top:341px;width:1.5px;height:2px;background:#7d7c80"></div>
<div class="a" style="left:377.15px;top:341px;width:1.5px;height:2px;background:#7d7c80"></div>
<div class="a" style="left:408.30px;top:341px;width:1.5px;height:2px;background:#7d7c80"></div>
<div class="a" style="left:439.45px;top:336px;width:1.5px;height:8px;background:#6f6e72"></div>
<div class="t" style="left:410.20px;top:318.5px;width:60px;text-align:center;font-size:15.5px;line-height:18px;color:#7a797d;-webkit-text-stroke:0">0</div>
<div class="a" style="left:470.60px;top:341px;width:1.5px;height:2px;background:#7d7c80"></div>
<div class="a" style="left:501.75px;top:341px;width:1.5px;height:2px;background:#7d7c80"></div>
<div class="a" style="left:532.90px;top:341px;width:1.5px;height:2px;background:#7d7c80"></div>
<div class="a" style="left:564.05px;top:336px;width:1.5px;height:8px;background:#6f6e72"></div>
<div class="t" style="left:534.80px;top:318.5px;width:60px;text-align:center;font-size:15.5px;line-height:18px;color:#7a797d;-webkit-text-stroke:0">2</div>
<div class="a" style="left:595.20px;top:341px;width:1.5px;height:2px;background:#7d7c80"></div>
<div class="a" style="left:626.35px;top:341px;width:1.5px;height:2px;background:#7d7c80"></div>
<div class="a" style="left:657.50px;top:341px;width:1.5px;height:2px;background:#7d7c80"></div>
<div class="a" style="left:688.65px;top:336px;width:1.5px;height:8px;background:#6f6e72"></div>
<div class="t" style="left:659.40px;top:318.5px;width:60px;text-align:center;font-size:15.5px;line-height:18px;color:#7a797d;-webkit-text-stroke:0">4</div>
<div class="a" style="left:719.80px;top:341px;width:1.5px;height:2px;background:#7d7c80"></div>
<div class="a" style="left:750.95px;top:341px;width:1.5px;height:2px;background:#7d7c80"></div>
<div class="a" style="left:782.10px;top:341px;width:1.5px;height:2px;background:#7d7c80"></div>
<div class="a" style="left:813.25px;top:336px;width:1.5px;height:8px;background:#6f6e72"></div>
<div class="t" style="left:784.00px;top:318.5px;width:60px;text-align:center;font-size:15.5px;line-height:18px;color:#7a797d;-webkit-text-stroke:0">6</div>
<div class="a" style="left:844.40px;top:341px;width:1.5px;height:2px;background:#7d7c80"></div>
<div class="a" style="left:875.55px;top:341px;width:1.5px;height:2px;background:#7d7c80"></div>
<div class="a" style="left:906.70px;top:341px;width:1.5px;height:2px;background:#7d7c80"></div>
<div class="a" style="left:937.85px;top:336px;width:1.5px;height:8px;background:#6f6e72"></div>
<div class="t" style="left:908.60px;top:318.5px;width:60px;text-align:center;font-size:15.5px;line-height:18px;color:#7a797d;-webkit-text-stroke:0">8</div>
<div class="a" style="left:969.00px;top:341px;width:1.5px;height:2px;background:#7d7c80"></div>
<div class="a" style="left:1000.15px;top:341px;width:1.5px;height:2px;background:#7d7c80"></div>
<div class="a" style="left:1031.30px;top:341px;width:1.5px;height:2px;background:#7d7c80"></div>
<div class="a" style="left:1062.45px;top:336px;width:1.5px;height:8px;background:#6f6e72"></div>
<div class="t" style="left:1033.20px;top:318.5px;width:60px;text-align:center;font-size:15.5px;line-height:18px;color:#7a797d;-webkit-text-stroke:0">10</div>
<div class="a" style="left:1093.60px;top:341px;width:1.5px;height:2px;background:#7d7c80"></div>
<div class="a" style="left:1124.75px;top:341px;width:1.5px;height:2px;background:#7d7c80"></div>
<div class="a" style="left:1155.90px;top:341px;width:1.5px;height:2px;background:#7d7c80"></div>
<div class="a" style="left:1187.05px;top:336px;width:1.5px;height:8px;background:#6f6e72"></div>
<div class="t" style="left:1157.80px;top:318.5px;width:60px;text-align:center;font-size:15.5px;line-height:18px;color:#7a797d;-webkit-text-stroke:0">12</div>
<div class="a" style="left:1218.20px;top:341px;width:1.5px;height:2px;background:#7d7c80"></div>
<div class="a" style="left:1249.35px;top:341px;width:1.5px;height:2px;background:#7d7c80"></div>
<div class="a" style="left:1280.50px;top:341px;width:1.5px;height:2px;background:#7d7c80"></div>
<div class="a" style="left:1311.65px;top:336px;width:1.5px;height:8px;background:#6f6e72"></div>
<div class="t" style="left:1282.40px;top:318.5px;width:60px;text-align:center;font-size:15.5px;line-height:18px;color:#7a797d;-webkit-text-stroke:0">14</div>
<div class="a" style="left:1342.80px;top:341px;width:1.5px;height:2px;background:#7d7c80"></div>
<div class="a" style="left:1373.95px;top:341px;width:1.5px;height:2px;background:#7d7c80"></div>
<div class="a" style="left:1405.10px;top:341px;width:1.5px;height:2px;background:#7d7c80"></div>
<div class="a" style="left:1436.25px;top:336px;width:1.5px;height:8px;background:#6f6e72"></div>
<div class="t" style="left:1407.00px;top:318.5px;width:60px;text-align:center;font-size:15.5px;line-height:18px;color:#7a797d;-webkit-text-stroke:0">16</div>
<!-- V RULER -->
<div class="a" style="left:51px;top:315px;width:33px;height:765px;background:#f1f0f3"></div>
<div class="a" style="left:51px;top:315px;width:1px;height:765px;background:#e2e1e5"></div>
<div class="a" style="left:83px;top:347px;width:2px;height:733px;background:#7c7b80"></div>
<div class="a" style="left:73px;top:420.00px;width:8px;height:1.8px;background:#6f6e72"></div>
<div class="t" style="left:33px;top:410.50px;width:60px;text-align:center;font-size:15px;line-height:18px;color:#7a797d;-webkit-text-stroke:0;transform:rotate(-90deg);transform-origin:30px 9px;left:35px">8</div>
<div class="a" style="left:79px;top:449.90px;width:2px;height:1.5px;background:#8d8c90"></div>
<div class="a" style="left:79px;top:481.05px;width:2px;height:1.5px;background:#8d8c90"></div>
<div class="a" style="left:79px;top:512.20px;width:2px;height:1.5px;background:#8d8c90"></div>
<div class="a" style="left:73px;top:544.60px;width:8px;height:1.8px;background:#6f6e72"></div>
<div class="t" style="left:33px;top:535.10px;width:60px;text-align:center;font-size:15px;line-height:18px;color:#7a797d;-webkit-text-stroke:0;transform:rotate(-90deg);transform-origin:30px 9px;left:35px">6</div>
<div class="a" style="left:79px;top:574.50px;width:2px;height:1.5px;background:#8d8c90"></div>
<div class="a" style="left:79px;top:605.65px;width:2px;height:1.5px;background:#8d8c90"></div>
<div class="a" style="left:79px;top:636.80px;width:2px;height:1.5px;background:#8d8c90"></div>
<div class="a" style="left:73px;top:669.20px;width:8px;height:1.8px;background:#6f6e72"></div>
<div class="t" style="left:33px;top:659.70px;width:60px;text-align:center;font-size:15px;line-height:18px;color:#7a797d;-webkit-text-stroke:0;transform:rotate(-90deg);transform-origin:30px 9px;left:35px">4</div>
<div class="a" style="left:79px;top:699.10px;width:2px;height:1.5px;background:#8d8c90"></div>
<div class="a" style="left:79px;top:730.25px;width:2px;height:1.5px;background:#8d8c90"></div>
<div class="a" style="left:79px;top:761.40px;width:2px;height:1.5px;background:#8d8c90"></div>
<div class="a" style="left:73px;top:793.80px;width:8px;height:1.8px;background:#6f6e72"></div>
<div class="t" style="left:33px;top:784.30px;width:60px;text-align:center;font-size:15px;line-height:18px;color:#7a797d;-webkit-text-stroke:0;transform:rotate(-90deg);transform-origin:30px 9px;left:35px">2</div>
<div class="a" style="left:79px;top:823.70px;width:2px;height:1.5px;background:#8d8c90"></div>
<div class="a" style="left:79px;top:854.85px;width:2px;height:1.5px;background:#8d8c90"></div>
<div class="a" style="left:79px;top:886.00px;width:2px;height:1.5px;background:#8d8c90"></div>
<div class="a" style="left:73px;top:918.40px;width:8px;height:1.8px;background:#6f6e72"></div>
<div class="t" style="left:33px;top:908.90px;width:60px;text-align:center;font-size:15px;line-height:18px;color:#7a797d;-webkit-text-stroke:0;transform:rotate(-90deg);transform-origin:30px 9px;left:35px">0</div>
<div class="a" style="left:79px;top:948.30px;width:2px;height:1.5px;background:#8d8c90"></div>
<div class="a" style="left:79px;top:979.45px;width:2px;height:1.5px;background:#8d8c90"></div>
<div class="a" style="left:79px;top:1010.60px;width:2px;height:1.5px;background:#8d8c90"></div>
<div class="a" style="left:73px;top:1043.00px;width:8px;height:1.8px;background:#6f6e72"></div>
<div class="t" style="left:33px;top:1033.50px;width:60px;text-align:center;font-size:15px;line-height:18px;color:#7a797d;-webkit-text-stroke:0;transform:rotate(-90deg);transform-origin:30px 9px;left:35px">2</div>
<div class="a" style="left:79px;top:1072.90px;width:2px;height:1.5px;background:#8d8c90"></div>
<div class="a" style="left:51px;top:315px;width:33px;height:32px;background:#f1f0f3"></div>
<!-- PAGE -->
<div class="a" style="left:450px;top:397px;width:686px;height:530px;background:#c3c2c6"></div>
<div class="a" style="left:440px;top:390px;width:686px;height:530px;background:#fefdff;border:1.5px solid #a2a1a5"></div>
<div class="a" style="left:543px;top:522px;width:515px;height:298px;background:#02abed;border:2px solid #0c1c2a"></div>
<div class="a" style="left:524px;top:503px;width:12px;height:12px;background:#000"></div>
<div class="a" style="left:524px;top:663px;width:12px;height:12px;background:#000"></div>
<div class="a" style="left:524px;top:823px;width:12px;height:12px;background:#000"></div>
<div class="a" style="left:792px;top:503px;width:12px;height:12px;background:#000"></div>
<div class="a" style="left:792px;top:823px;width:12px;height:12px;background:#000"></div>
<div class="a" style="left:1060px;top:503px;width:12px;height:12px;background:#000"></div>
<div class="a" style="left:1060px;top:663px;width:12px;height:12px;background:#000"></div>
<div class="a" style="left:1060px;top:823px;width:12px;height:12px;background:#000"></div>
<div class="a" style="left:539.5px;top:519.5px;width:7px;height:7px;background:#fff;border:1.8px solid #000;border-radius:1px"></div>
<div class="a" style="left:1053.5px;top:519.5px;width:7px;height:7px;background:#fff;border:1.8px solid #000;border-radius:1px"></div>
<div class="a" style="left:539.5px;top:815.5px;width:7px;height:7px;background:#fff;border:1.8px solid #000;border-radius:1px"></div>
<div class="a" style="left:1053.5px;top:815.5px;width:7px;height:7px;background:#fff;border:1.8px solid #000;border-radius:1px"></div>
<svg style="left:795px;top:664px" width="11" height="13" viewBox="0 0 11 13"><path d="M0.5 0.5 H4 L5.5 2.5 L7 0.5 H10.5 V12.5 H7 L5.5 10.5 L4 12.5 H0.5 Z" fill="#ee5a2a"/><path d="M4 5.5 H7 V7.5 H4Z" fill="#ff4a10"/></svg>
<!-- TOOLBOX -->
<div class="a" style="left:0;top:194px;width:50px;height:886px;background:#f4f3f6"></div>
<div class="a" style="left:50px;top:194px;width:1.5px;height:886px;background:#d9d8dc"></div>
<div class="a" style="left:5px;top:202px;width:42px;height:4px;background-image:radial-gradient(circle,#a3a2a6 1.1px,transparent 1.5px);background-size:7px 4px"></div>
<svg style="left:0;top:0" width="1" height="1" viewBox="0 0 1 1"><path d="M19.6 219 V236.5 L23.5 232.5 L27.5 242 L31 240.5 L27 231 H33.5 Z" fill="#fbfbfc" stroke="#5f5e66" stroke-width="1.7" stroke-linejoin="round"/></svg>
<svg style="left:35px;top:241px" width="9" height="9" viewBox="0 0 9 9"><path d="M9 0 V9 H0 Z" fill="#050505"/></svg>
<svg style="left:0;top:0" width="1" height="1" viewBox="0 0 1 1"><path d="M14.6 269.5 H26.8 Q26 277 29.5 283 Q26.5 288 26.7 292.3 H14.6 Q14 287 17 283.5 Q22 278 14.6 269.5 Z" fill="#f6f6f8" stroke="#67666d" stroke-width="2.2" stroke-linejoin="round"/><path d="M30 278 L38 280.5 L30 283 Z" fill="#9d9ca3"/></svg>
<svg style="left:35px;top:288px" width="9" height="9" viewBox="0 0 9 9"><path d="M9 0 V9 H0 Z" fill="#050505"/></svg>
<div class="a" style="left:6px;top:311px;width:38px;height:2px;background:#dedde1;border-bottom:1px solid #fbfbfd"></div>
<div class="a" style="left:7px;top:323px;width:39px;height:40px;background:linear-gradient(#e3eef8,#d4e4f2);border:2px solid #aacbe8"></div>
<svg style="left:0;top:0" width="1" height="1" viewBox="0 0 1 1"><path d="M12.5 350.5 L19 344 L25.5 350.5 L19 357 Z" fill="#f890a8" stroke="#f8b070" stroke-width="1.2"/><path d="M22.5 342.5 L29 348.5 M24.5 340.5 L31 346.5" stroke="#8a9838" stroke-width="1.8"/><path d="M26 339 L36.5 329 M39.5 336.5 L30.5 344.5" stroke="#7a8630" stroke-width="2"/></svg>
<svg style="left:35px;top:350px" width="9" height="9" viewBox="0 0 9 9"><path d="M9 0 V9 H0 Z" fill="#3a3a20"/></svg>
<svg style="left:11px;top:379px" width="34" height="28" viewBox="0 0 34 28"><circle cx="12" cy="12" r="10" fill="#f6f6f8" stroke="#2a2a30" stroke-width="2"/><path d="M5 13 Q12 17 19 13 V16 Q12 20 5 16Z" fill="#c8c7cf"/><path d="M19 19 L27 26" stroke="#141418" stroke-width="4"/></svg>
<svg style="left:35px;top:399px" width="9" height="9" viewBox="0 0 9 9"><path d="M9 0 V9 H0 Z" fill="#050505"/></svg>
<div class="a" style="left:6px;top:422px;width:38px;height:2px;background:#dedde1;border-bottom:1px solid #fbfbfd"></div>
<svg style="left:13px;top:441px" width="26" height="26" viewBox="0 0 26 26"><path d="M5 21 L21 5" stroke="#3a3940" stroke-width="1.8"/><rect x="1.5" y="17.5" width="6" height="6" fill="#fff" stroke="#3a3940" stroke-width="1.6"/><rect x="18" y="1.5" width="6" height="6" fill="#fff" stroke="#3a3940" stroke-width="1.6"/></svg>
<svg style="left:34px;top:462px" width="9" height="9" viewBox="0 0 9 9"><path d="M9 0 V9 H0 Z" fill="#050505"/></svg>
<svg style="left:13px;top:493px" width="27" height="19" viewBox="0 0 27 19"><path d="M2 7 Q4 1 8 4 Q12 8 15 12 Q18 17 22 15 Q26 12 23 7 Q21 4 18 6" fill="none" stroke="#2a2a30" stroke-width="3" stroke-linecap="round"/></svg>
<div class="a" style="left:7px;top:531px;width:39px;height:40px;background:#fbfbfc;border:2px solid #a9a8ad"></div>
<svg style="left:15px;top:541px" width="24" height="22" viewBox="0 0 24 22"><rect x="1.5" y="1.5" width="19" height="19" fill="#f4f4f7" stroke="#48474e" stroke-width="1.8"/><rect x="3.5" y="10" width="15" height="6" fill="#dcdbe3"/></svg>
<svg style="left:35px;top:559px" width="9" height="9" viewBox="0 0 9 9"><path d="M9 0 V9 H0 Z" fill="#050505"/></svg>
<svg style="left:14px;top:589px" width="24" height="23" viewBox="0 0 24 23"><ellipse cx="11.5" cy="11" rx="10" ry="9.5" fill="#f2f2f4" stroke="#3a3940" stroke-width="2.2"/><path d="M3 12 Q11.5 17 20 12 Q19 20 11.5 20.5 Q4 20 3 12Z" fill="#d4d3da"/></svg>
<svg style="left:35px;top:603px" width="9" height="9" viewBox="0 0 9 9"><path d="M9 0 V9 H0 Z" fill="#050505"/></svg>
<svg style="left:13px;top:636px" width="26" height="24" viewBox="0 0 26 24"><path d="M7 2 H19 L24.5 12 L19 22 H7 L1.5 12 Z" fill="#f2f2f4" stroke="#3a3940" stroke-width="2.2" stroke-linejoin="round"/><path d="M4 13 H22 L19 20 H7Z" fill="#d4d3da"/></svg>
<svg style="left:35px;top:653px" width="9" height="9" viewBox="0 0 9 9"><path d="M9 0 V9 H0 Z" fill="#050505"/></svg>
<div class="a" style="left:6px;top:683px;width:38px;height:2px;background:#dedde1;border-bottom:1px solid #fbfbfd"></div>
<svg style="left:12px;top:696px" width="30" height="26" viewBox="0 0 30 26"><path d="M2 25 L11 1.5 H17 L26 25 H20 L18 19 H10 L8 25 Z M11.5 14 H16.5 L14 7 Z" fill="#f0f0f2" stroke="#5a5960" stroke-width="2" stroke-linejoin="round"/></svg>
<svg style="left:35px;top:717px" width="9" height="9" viewBox="0 0 9 9"><path d="M9 0 V9 H0 Z" fill="#050505"/></svg>
<div class="a" style="left:6px;top:740px;width:38px;height:2px;background:#dedde1;border-bottom:1px solid #fbfbfd"></div>
<svg style="left:13px;top:759px" width="27" height="25" viewBox="0 0 27 25"><path d="M5 20 L21 5" stroke="#1e1e24" stroke-width="2.6"/><path d="M1 16 L9 24 M3 14 L11 22 M17 1 L25 9 M15 3 L23 11" stroke="#1e1e24" stroke-width="2"/></svg>
<svg style="left:35px;top:777px" width="9" height="9" viewBox="0 0 9 9"><path d="M9 0 V9 H0 Z" fill="#050505"/></svg>
<svg style="left:16px;top:805px" width="24" height="30" viewBox="0 0 24 30"><path d="M5 6 L18 23" stroke="#5a6aa0" stroke-width="1.6"/><rect x="1" y="1" width="7" height="7" fill="#9a8ab8" stroke="#4a4a8a" stroke-width="1.4"/><rect x="14" y="19" width="8" height="8" fill="#f07010" stroke="#703010" stroke-width="1.4"/></svg>
<svg style="left:35px;top:823px" width="9" height="9" viewBox="0 0 9 9"><path d="M9 0 V9 H0 Z" fill="#050505"/></svg>
<div class="a" style="left:6px;top:852px;width:38px;height:2px;background:#dedde1;border-bottom:1px solid #fbfbfd"></div>
<svg style="left:13px;top:871px" width="26" height="24" viewBox="0 0 26 24"><rect x="6" y="6" width="18" height="16" fill="#7a7980"/><rect x="1.5" y="1.5" width="17" height="15" fill="#f6f6f8" stroke="#2e2e34" stroke-width="2"/></svg>
<svg style="left:35px;top:890px" width="9" height="9" viewBox="0 0 9 9"><path d="M9 0 V9 H0 Z" fill="#050505"/></svg>
<svg style="left:12px;top:916px" width="30" height="30" viewBox="0 0 30 30"><path d="M9 4 L22 2 Q22 12 15 13 Z" fill="#3a3940" stroke="#3a3940" stroke-width="1.8"/><path d="M9 4 Q10 10 15 13" fill="#f4f4f6" stroke="#3a3940" stroke-width="1.8"/><path d="M14 13 L6 22 M2 18 L10 26" stroke="#4a4950" stroke-width="2"/><path d="M19 28 L24 18 L29 28 Z" fill="#4a4950"/></svg>
<div class="a" style="left:6px;top:961px;width:38px;height:2px;background:#dedde1;border-bottom:1px solid #fbfbfd"></div>
<svg style="left:12px;top:979px" width="30" height="29" viewBox="0 0 30 29"><rect x="1" y="13" width="14" height="14" fill="#e8841c"/><rect x="3" y="16" width="4" height="4" fill="#7a3a0a"/><rect x="9" y="20" width="4" height="4" fill="#7a3a0a"/><path d="M10 19 L22 7" stroke="#2a2a30" stroke-width="2.5"/><circle cx="24" cy="5" r="4.5" fill="#1e1e24"/><path d="M17 6 L23 12" stroke="#1e1e24" stroke-width="3"/></svg>
<svg style="left:35px;top:1003px" width="9" height="9" viewBox="0 0 9 9"><path d="M9 0 V9 H0 Z" fill="#050505"/></svg>
<svg style="left:14px;top:1029px" width="30" height="28" viewBox="0 0 30 28"><path d="M2 9 L9 2 L16 9 L9 16 Z" fill="#f6f2e0" stroke="#3a3a58" stroke-width="1.8"/><path d="M5 10 L9 14 L13 10 Z" fill="#a07a20"/><path d="M8 1 L12 5" stroke="#3a3a58" stroke-width="2"/><path d="M10 25 L16 18 L22 25 Z" fill="#e8d070"/></svg>
<svg style="left:35px;top:1050px" width="9" height="9" viewBox="0 0 9 9"><path d="M9 0 V9 H0 Z" fill="#050505"/></svg>
<svg style="left:17px;top:1072px" width="14" height="10" viewBox="0 0 14 10"><path d="M2 8 L7 2 L12 8" stroke="#3a3a58" stroke-width="2" fill="none"/></svg>
<!-- POPUP -->
<div class="a" style="left:50px;top:322px;width:331px;height:218px;background:#fcfbfd;border:1.5px solid #b3b2b7"></div>
<div class="a" style="left:51.5px;top:323.5px;width:43px;height:215px;background:#f1f0f3"></div>
<div class="a" style="left:100px;top:331px;width:276px;height:3px;background-image:radial-gradient(circle,#b3b2b6 1px,transparent 1.3px);background-size:6px 3px"></div>
<div class="a" style="left:52px;top:376px;width:325px;height:33px;background:#c8c7cb"></div>
<div class="a" style="left:95px;top:493px;width:280px;height:2px;background:#e4e3e7"></div>
<div class="t" style="left:112px;top:342px;font-size:20.3px;color:#1c1224">Crop</div>
<div class="t" style="left:112px;top:380px;font-size:20.3px;color:#1c1224">Knife (Premium)</div>
<div class="t" style="left:112px;top:418px;font-size:20.3px;color:#1c1224">Knife</div>
<div class="t" style="left:112px;top:456px;font-size:20.3px;color:#1c1224">Virtual Segment Delete</div>
<div class="t" style="left:112px;top:506px;font-size:20.3px;color:#1c1224">Eraser</div>
<div class="t" style="left:331px;top:506px;font-size:20.3px;color:#1c1224">X</div>
<svg style="left:0;top:0" width="1" height="1" viewBox="0 0 1 1" overflow="visible">
 <g stroke="#25232e" fill="none" stroke-linecap="butt">
  <path d="M67.2 343 V360 H84.5" stroke-width="2.6"/>
  <path d="M60.5 349 H78 V366" stroke-width="2.6"/>
  <path d="M68 359 L83.5 343.5" stroke-width="2"/>
  <circle cx="67.2" cy="343.5" r="1.4" fill="#25232e" stroke="none"/>
 </g>
 <path d="M62 384.5 L79.5 400.5" stroke="#2c2a3a" stroke-width="6.5" stroke-linecap="round"/>
 <path d="M63 382.5 Q76 380.5 85.5 383 Q86.5 386 82 387 L69 387.5" stroke="#3a3844" stroke-width="1.7" fill="none"/>
 <path d="M71 390 Q79 389.5 84 391 Q84 393.5 79.5 393.5" stroke="#3a3844" stroke-width="1.7" fill="none"/>
 <path d="M62.5 440.5 L78.5 425.5 L83.5 430 L70 439 Z" fill="#3a3944"/>
 <path d="M74 432 L79.5 427 M76.5 434.5 L81.5 429.5" stroke="#eeeef2" stroke-width="1"/>
 <path d="M66 437 L71 433" stroke="#b8b8c0" stroke-width="2"/>
 <path d="M59 466 L65.5 460.5 M73 479.5 L79 474 M62 463.5 L76 477" stroke="#25232e" stroke-width="2.4"/>
 <path d="M67 471 L81 457.5 L86.5 462.5 L73 475 Z" fill="#3a3944"/>
 <path d="M76 464 L82 458.5 M78.5 467 L84.5 461.5" stroke="#eeeef2" stroke-width="1"/>
 <path d="M69 470 L74 465" stroke="#b8b8c0" stroke-width="2"/>
 <path d="M59 527 L65.5 520.5 L72 527 L65.5 533.5 Z" fill="#cf3fc0"/>
 <path d="M62 527.5 L65 530.5" stroke="#ff90f0" stroke-width="2"/>
 <path d="M69 519 L75.5 525 M71 517 L77.5 523" stroke="#2a6a5e" stroke-width="1.8"/>
 <path d="M72.5 515.5 L83 505.5 M86 513 L77 521" stroke="#2a2a30" stroke-width="2.2"/>
</svg>
<div class="a" style="left:5.5px;top:328px;width:54px;height:54px;border-radius:50%;mix-blend-mode:multiply;background:radial-gradient(circle,#f5f796 0%,#f5f796 60%,#f8f9b4 85%,rgba(255,255,255,0) 100%)"></div>
<svg style="left:32px;top:356px" width="24" height="36" viewBox="0 0 24 36"><path d="M1.5 1.5 V28 L7.5 22.5 L12 32 L15.5 30.5 L11.5 21 H21 Z" fill="#f6f6ee" stroke="#0a0a06" stroke-width="1.6" stroke-linejoin="round"/></svg>
</body></html>
